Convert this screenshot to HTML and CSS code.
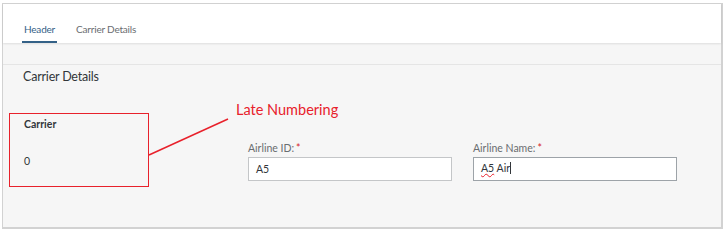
FILE: index.html
```html
<!DOCTYPE html>
<html lang="en">
  <head>
    <meta charset="UTF-8" />
    <title>Carrier</title>
    <link rel="stylesheet" href="styles.css">
  </head>
  <body>
    <div id="frame">
      <div id="tabs">
        <a class="tab active">Header</a>
        <a class="tab">Carrier Details</a>
      </div>
      <div id="content">
        <div class="divider"></div>
        <h2 class="section-title">Carrier Details</h2>
        <div class="form-row">
          <div class="carrier-box">
            <div class="field-title">Carrier</div>
            <div class="field-value">0</div>
          </div>
          <div class="field id-field">
            <label>Airline ID:<span class="req">*</span></label>
            <div class="input">A5</div>
          </div>
          <div class="field">
            <label>Airline Name:<span class="req">*</span></label>
            <div class="input focused"><span class="typo">A5</span> Air<span class="caret"></span></div>
          </div>
        </div>
      </div>
      <!-- annotation -->
      <svg class="pointer" width="90" height="45" viewBox="0 0 90 45">
        <line x1="1" y1="40" x2="80" y2="4" stroke="#e8212b" stroke-width="1.5" />
      </svg>
      <div class="note">Late Numbering</div>
    </div>
  </body>
</html>
```

FILE: styles.css
```css
* {
  margin: 0;
  padding: 0;
  box-sizing: border-box;
}
body {
  background: #fff;
  font-family: Lato, "Open Sans", sans-serif;
  color: #32363a;
}
#frame {
  position: relative;
  margin: 3px 0 0 2px;
  width: 721px;
  height: 226px;
  border: 1px solid #d2d2d2;
  border-right-width: 2px;
  border-bottom-width: 2px;
  background: #f6f6f6;
}
#tabs {
  height: 39px;
  background: #fff;
  display: flex;
  padding-left: 19px;
  box-shadow: 0 1px 2px rgba(0, 0, 0, 0.1);
  position: relative;
}
.tab {
  font-size: 10px;
  letter-spacing: -0.2px;
  color: #6a6d70;
  padding: 19px 0 0;
  margin-right: 19px;
  height: 39px;
}
.tab.active {
  color: #346187;
  border-bottom: 2px solid #346187;
  padding: 19px 2px 0 2px;
}
#content {
  padding-top: 21px;
}
.divider {
  border-top: 1px solid #e5e5e5;
}
.section-title {
  font-size: 12.5px;
  letter-spacing: -0.2px;
  font-weight: normal;
  padding: 4px 0 0 20px;
  height: 36px;
}
.form-row {
  display: flex;
  align-items: flex-start;
  padding-left: 6px;
  margin-top: 12px;
}
.carrier-box {
  width: 140px;
  height: 74px;
  border: 1.5px solid #e8212b;
  padding: 3px 0 0 14px;
}
.field-title {
  font-size: 10.5px;
  font-weight: bold;
  height: 37px;
  line-height: 14px;
}
.field-value {
  font-size: 10.5px;
  line-height: 14px;
}
.field {
  margin-top: 28px;
}
.id-field {
  margin-left: 99px;
  margin-right: 21px;
}
label {
  display: block;
  font-size: 10.5px;
  color: #6a6d70;
  height: 16px;
  line-height: 14px;
}
.req {
  color: #d7262d;
  margin-left: 2px;
}
.input {
  width: 204px;
  height: 24px;
  background: #fff;
  border: 1px solid #c4c6c8;
  font-size: 10.5px;
  line-height: 22px;
  padding-left: 7px;
}
.input.focused {
  border: 1.5px solid #9da3a8;
  line-height: 21px;
}
.typo {
  text-decoration: underline wavy #e8212b;
  text-decoration-thickness: 1px;
}
.caret {
  display: inline-block;
  width: 1px;
  height: 12px;
  background: #32363a;
  vertical-align: -2px;
}
.pointer {
  position: absolute;
  left: 145px;
  top: 111px;
}
.note {
  position: absolute;
  left: 233px;
  top: 97px;
  color: #e8212b;
  font-size: 14.5px;
}
```
